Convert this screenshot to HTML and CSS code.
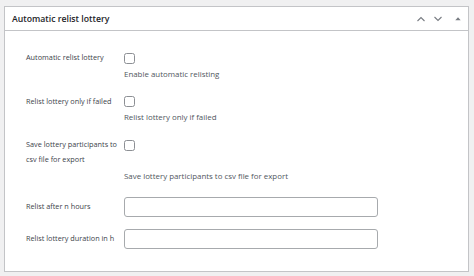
FILE: index.html
```html
<!DOCTYPE html>
<html>
<head>
<meta charset="utf-8">
<link rel="stylesheet" href="styles.css">
</head>
<body>
<div class="postbox">
  <div class="postbox-header">
    <h2 class="title">Automatic relist lottery</h2>
    <div class="handles">
      <svg class="icon" width="10" height="6" viewBox="0 0 10 6"><path d="M1.5 5 L5 1.5 L8.5 5" fill="none" stroke="#787c82" stroke-width="1.1"/></svg>
      <svg class="icon" width="10" height="6" viewBox="0 0 10 6"><path d="M1.5 1 L5 4.5 L8.5 1" fill="none" stroke="#787c82" stroke-width="1.1"/></svg>
      <svg class="icon tri" width="8" height="5" viewBox="0 0 8 5"><path d="M1.3 4.3 L4 1.2 L6.7 4.3 Z" fill="#787c82"/></svg>
    </div>
  </div>
  <div class="inside">
    <div class="row">
      <label class="label">Automatic relist lottery</label>
      <div class="control"><span class="checkbox"></span></div>
      <p class="desc">Enable automatic relisting</p>
    </div>
    <div class="row">
      <label class="label">Relist lottery only if failed</label>
      <div class="control"><span class="checkbox"></span></div>
      <p class="desc">Relist lottery only if failed</p>
    </div>
    <div class="row">
      <label class="label">Save lottery participants to csv file for export</label>
      <div class="control"><span class="checkbox"></span></div>
      <p class="desc">Save lottery participants to csv file for export</p>
    </div>
    <div class="row text-row">
      <label class="label">Relist after n hours</label>
      <div class="control"><span class="input"></span></div>
    </div>
    <div class="row text-row">
      <label class="label">Relist lottery duration in h</label>
      <div class="control"><span class="input"></span></div>
    </div>
  </div>
</div>
</body>
</html>
```

FILE: styles.css
```css
html, body {
  margin: 0;
  height: 100%;
}
body {
  box-sizing: border-box;
  background: #f0f0f1;
  padding: 6px 5px 4px 4px;
  display: flex;
  flex-direction: column;
  font-family: "Open Sans", "Noto Sans", sans-serif;
  color: #1d2327;
}
.postbox {
  flex: 1;
  background: #fff;
  border: 1px solid #c3c4c7;
  display: flex;
  flex-direction: column;
}
.postbox-header {
  height: 23px;
  border-bottom: 1px solid #c3c4c7;
  display: flex;
  align-items: center;
  justify-content: space-between;
  padding: 0 6px 0 7px;
}
.title {
  margin: 0;
  font-size: 8.7px;
  font-weight: 600;
  color: #1d2327;
}
.handles {
  display: flex;
  align-items: center;
  gap: 7px;
}
.tri {
  margin-left: 4px;
}
.inside {
  padding: 19px 0 0 21px;
  display: flex;
  flex-direction: column;
}
.row {
  display: grid;
  grid-template-columns: 98px 1fr;
  margin-top: 14px;
}
.row:first-child {
  margin-top: 0;
}
.text-row {
  margin-top: 15px;
  align-items: center;
}
.text-row + .text-row {
  margin-top: 12px;
}
.label {
  font-size: 7.3px;
  line-height: 15px;
  color: #3c434a;
  padding-right: 6px;
}
.control {
  display: flex;
  align-items: flex-start;
}
.checkbox {
  display: block;
  width: 9px;
  height: 9px;
  margin-top: 2.5px;
  border: 1px solid #8c8f94;
  border-radius: 2.5px;
  background: #fff;
}
.input {
  display: block;
  width: 252px;
  height: 18px;
  border: 1px solid #a7aaad;
  border-radius: 3px;
  background: #fff;
}
.desc {
  grid-column: 2;
  margin: 2.5px 0 0;
  font-size: 7.9px;
  line-height: 12px;
  color: #50575e;
}
```
